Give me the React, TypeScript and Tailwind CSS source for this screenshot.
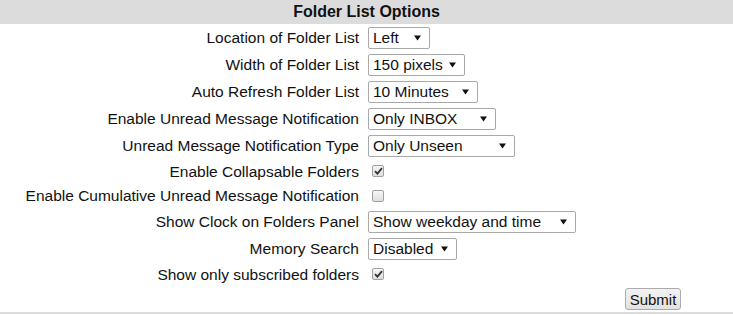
import React from "react";

type Row =
  | { label: string; kind: "select"; value: string; width: string }
  | { label: string; kind: "check"; checked: boolean };

const ROWS: Row[] = [
  { label: "Location of Folder List", kind: "select", value: "Left", width: "w-[62px]" },
  { label: "Width of Folder List", kind: "select", value: "150 pixels", width: "w-[97px]" },
  { label: "Auto Refresh Folder List", kind: "select", value: "10 Minutes", width: "w-[110px]" },
  { label: "Enable Unread Message Notification", kind: "select", value: "Only INBOX", width: "w-[128px]" },
  { label: "Unread Message Notification Type", kind: "select", value: "Only Unseen", width: "w-[147px]" },
  { label: "Enable Collapsable Folders", kind: "check", checked: true },
  { label: "Enable Cumulative Unread Message Notification", kind: "check", checked: false },
  { label: "Show Clock on Folders Panel", kind: "select", value: "Show weekday and time", width: "w-[208px]" },
  { label: "Memory Search", kind: "select", value: "Disabled", width: "w-[89px]" },
  { label: "Show only subscribed folders", kind: "check", checked: true },
];

function FakeSelect({ value, width }: { value: string; width: string }) {
  return (
    <div
      className={`${width} flex h-[22px] items-center justify-between rounded-[2px] border border-[#a9a9a9] bg-white pl-[4px] pr-[8px] text-[15.5px] leading-none text-[#111]`}
    >
      <span>{value}</span>
      <svg width="7" height="6" viewBox="0 0 7 6" className="shrink-0">
        <path d="M0 0.5 H7 L3.5 5.5 Z" fill="#111" />
      </svg>
    </div>
  );
}

function FakeCheck({ checked }: { checked: boolean }) {
  return (
    <div className="ml-[4px] flex h-[12px] w-[12px] items-center justify-center rounded-[2px] border border-[#a0a0a0] bg-gradient-to-b from-[#f6f6f6] to-[#dedede]">
      {checked && (
        <svg width="9" height="8" viewBox="0 0 9 8">
          <path d="M1 4.2 L3.4 6.6 L8 1.2" stroke="#333" strokeWidth="1.8" fill="none" />
        </svg>
      )}
    </div>
  );
}

export default function App() {
  return (
    <div className="h-[315px] w-[733px] bg-white font-['Liberation_Sans',Arial,sans-serif] text-[#111]">
      {/* section header */}
      <div className="flex h-[24px] items-center justify-center bg-[#dcdcdc] text-[16px] font-bold">
        Folder List Options
      </div>

      <div className="grid grid-cols-[366px_1fr]">
        {ROWS.map((row) => (
          <React.Fragment key={row.label}>
            <div
              className={`flex items-center justify-end pr-[7px] text-[15.5px] ${
                row.kind === "select" ? "h-[27px]" : "h-[24.5px]"
              }`}
            >
              {row.label}
            </div>
            <div
              className={`flex items-center pl-[2px] ${row.kind === "select" ? "h-[27px]" : "h-[24.5px]"}`}
            >
              {row.kind === "select" ? (
                <FakeSelect value={row.value} width={row.width} />
              ) : (
                <FakeCheck checked={row.checked} />
              )}
            </div>
          </React.Fragment>
        ))}
      </div>

      <div className="flex h-[25px] items-center justify-end pr-[52px]">
        <button
          type="button"
          className="h-[22px] w-[56px] rounded-[3px] border border-[#acacac] bg-gradient-to-b from-[#f2f2f2] to-[#e2e2e2] text-[15px] leading-none text-[#111]"
        >
          Submit
        </button>
      </div>

      <div className="h-[2px] bg-[#dcdcdc]" />
    </div>
  );
}
